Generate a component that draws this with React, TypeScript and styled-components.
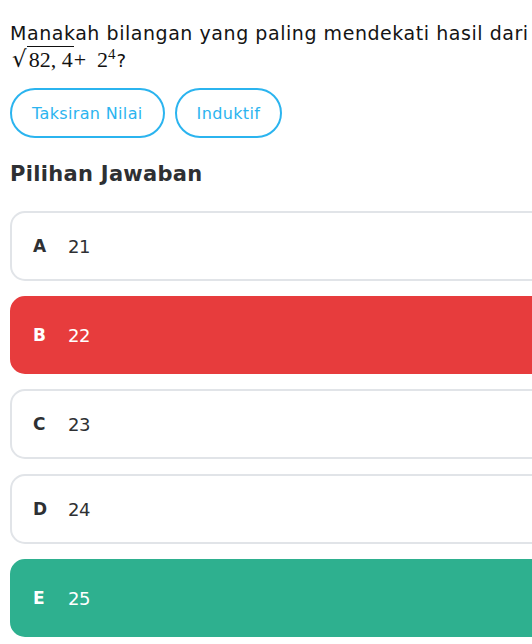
import React from "react";
import styled, { createGlobalStyle } from "styled-components";

const Global = createGlobalStyle`
  html, body {
    margin: 0;
    padding: 0;
    background: #fff;
    overflow: hidden;
  }
  body {
    font-family: "DejaVu Sans", "Noto Sans", sans-serif;
  }
`;

const Page = styled.div`
  width: 560px;
  padding: 21px 0 0 10px;
`;

const Question = styled.p`
  margin: 0;
  font-size: 19px;
  line-height: 24px;
  letter-spacing: 0.55px;
  color: #141414;
  white-space: nowrap;
`;

const MathLine = styled.div`
  margin-top: 1px;
  padding-left: 2px;
  font-family: "Liberation Serif", "DejaVu Serif", serif;
  font-size: 22px;
  color: #111;
  line-height: 26px;
  white-space: nowrap;
`;

const Radical = styled.span`
  font-size: 23px;
  font-family: "DejaVu Serif", serif;
`;

const Radicand = styled.span`
  border-top: 1.3px solid #111;
  padding: 0 1px 0 2px;
`;

const Sup = styled.sup`
  font-size: 15px;
  vertical-align: 8px;
  line-height: 0;
`;

const Qmark = styled.span`
  font-family: "DejaVu Sans", sans-serif;
  font-size: 18px;
  margin-left: 1px;
`;

const Tags = styled.div`
  display: flex;
  gap: 10px;
  margin-top: 14px;
`;

const Tag = styled.span`
  display: inline-flex;
  align-items: center;
  justify-content: center;
  height: 50px;
  padding: 0 20px;
  box-sizing: border-box;
  border: 2px solid #2bb4ef;
  border-radius: 25px;
  color: #2bb4ef;
  font-size: 16px;
  letter-spacing: 0.35px;
`;

const Heading = styled.h2`
  margin: 23px 0 0;
  font-size: 21px;
  line-height: 26px;
  font-weight: 700;
  letter-spacing: 0.3px;
  color: #2e3033;
`;

const Options = styled.div`
  display: flex;
  flex-direction: column;
  gap: 15px;
  margin-top: 24px;
`;

const tones = {
  none: { bg: "#fff", fg: "#2e3033", border: "#e1e4e8" },
  wrong: { bg: "#e73c3d", fg: "#fff", border: "#e73c3d" },
  right: { bg: "#2eb08f", fg: "#fff", border: "#2eb08f" },
};

type Tone = keyof typeof tones;

const Option = styled.div<{ $tone: Tone }>`
  display: flex;
  align-items: center;
  height: ${(p) => (p.$tone === "none" ? 70 : 78)}px;
  box-sizing: border-box;
  padding-left: 21px;
  border-radius: 15px;
  background: ${(p) => tones[p.$tone].bg};
  border: 2px solid ${(p) => tones[p.$tone].border};
  color: ${(p) => tones[p.$tone].fg};
`;

const Letter = styled.span`
  width: 35px;
  font-size: 17px;
  font-weight: 700;
`;

const Value = styled.span`
  font-size: 18px;
  letter-spacing: -0.5px;
`;

const answers: { letter: string; value: string; tone: Tone }[] = [
  { letter: "A", value: "21", tone: "none" },
  { letter: "B", value: "22", tone: "wrong" },
  { letter: "C", value: "23", tone: "none" },
  { letter: "D", value: "24", tone: "none" },
  { letter: "E", value: "25", tone: "right" },
];

const App = () => (
  <Page>
    <Global />
    <Question>Manakah bilangan yang paling mendekati hasil dari</Question>
    <MathLine>
      <Radical>√</Radical>
      <Radicand>82, 4</Radicand>
      <span>+&nbsp;&nbsp;2</span>
      <Sup>4</Sup>
      <Qmark>?</Qmark>
    </MathLine>
    <Tags>
      <Tag>Taksiran Nilai</Tag>
      <Tag>Induktif</Tag>
    </Tags>
    <Heading>Pilihan Jawaban</Heading>
    <Options>
      {answers.map((a) => (
        <Option key={a.letter} $tone={a.tone}>
          <Letter>{a.letter}</Letter>
          <Value>{a.value}</Value>
        </Option>
      ))}
    </Options>
  </Page>
);

export default App;
